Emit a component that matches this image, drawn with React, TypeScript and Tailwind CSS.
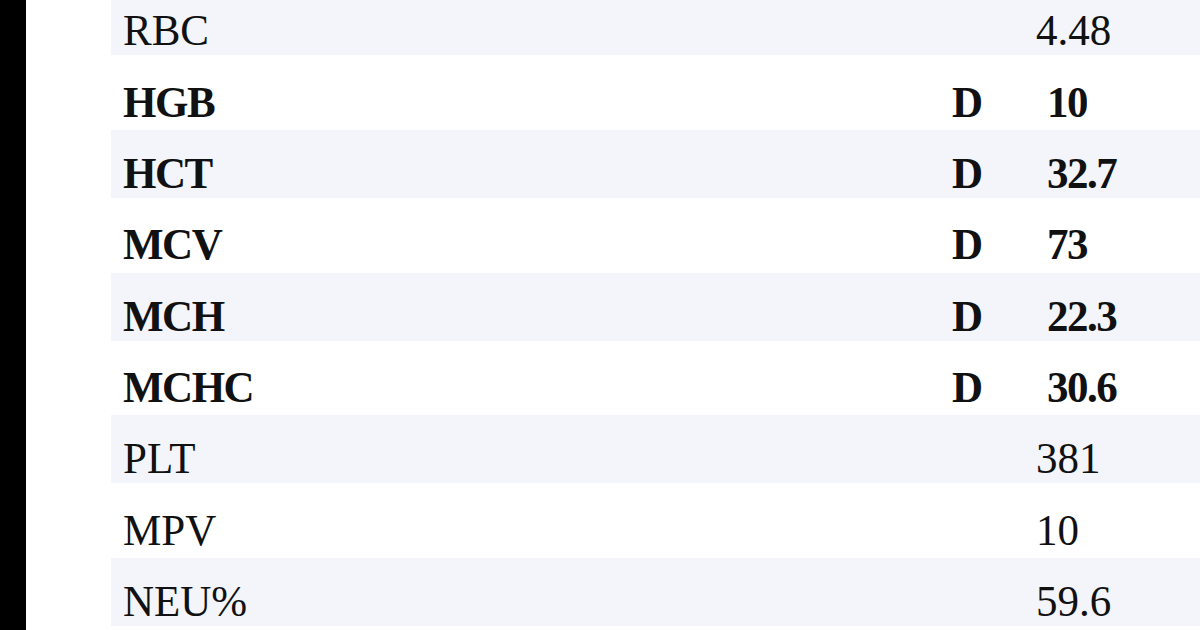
import React from 'react';

type Row = { name: string; flag?: string; value: string; bold?: boolean };

const rows: Row[] = [
  { name: 'RBC', value: '4.48' },
  { name: 'HGB', flag: 'D', value: '10', bold: true },
  { name: 'HCT', flag: 'D', value: '32.7', bold: true },
  { name: 'MCV', flag: 'D', value: '73', bold: true },
  { name: 'MCH', flag: 'D', value: '22.3', bold: true },
  { name: 'MCHC', flag: 'D', value: '30.6', bold: true },
  { name: 'PLT', value: '381' },
  { name: 'MPV', value: '10' },
  { name: 'NEU%', value: '59.6' },
];

export default function App() {
  return (
    <div
      className="flex h-[630px] w-[1200px] overflow-hidden bg-white text-[#111]"
      style={{ fontFamily: '"Liberation Serif", "Times New Roman", serif' }}
    >
      <div className="w-[26px] shrink-0 bg-black" />
      <div className="ml-[85px] flex-1 -mt-[12.67px]">
        {rows.map((r, i) => (
          <div key={r.name} className="h-[71.33px]">
            <div
              className={`grid h-[68px] grid-cols-[829px_84px_1fr] pt-[22px] pl-3 text-[43px] leading-none ${
                i % 2 === 0 ? 'bg-[#f3f5fa]' : 'bg-white'
              } ${r.bold ? 'font-bold tracking-[-1.5px]' : ''}`}
            >
              <span className="inline-block origin-[50%_85%] scale-y-105">{r.name}</span>
              <span className="inline-block origin-[50%_85%] scale-y-105">{r.flag ?? ''}</span>
              <span className={`inline-block origin-[50%_85%] scale-y-105 ${r.bold ? 'pl-[11px]' : ''}`}>
                {r.value}
              </span>
            </div>
          </div>
        ))}
      </div>
    </div>
  );
}
